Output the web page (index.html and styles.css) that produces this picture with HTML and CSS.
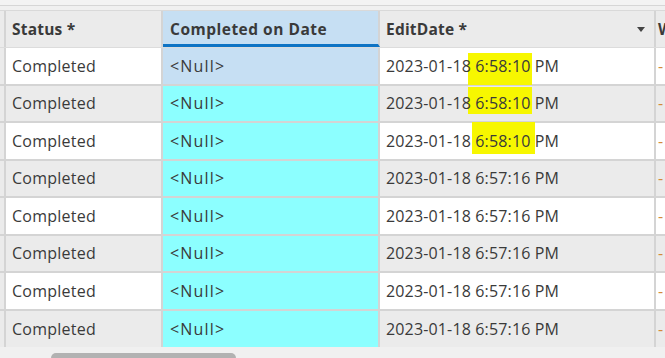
FILE: index.html
```html
<!DOCTYPE html>
<html>
<head>
<meta charset="utf-8">
<link rel="stylesheet" href="styles.css">
</head>
<body>
<div class="top"></div>
<div class="grid">
  <div class="row head">
    <div class="gut"></div>
    <div class="c c1"><span>Status *</span></div>
    <div class="c c2 sel"><span>Completed on Date</span></div>
    <div class="c c3"><span>EditDate *</span><span class="tri"></span></div>
    <div class="c c4"><span>W</span></div>
  </div>
  <div class="row odd">
    <div class="gut"></div>
    <div class="c c1"><span>Completed</span></div>
    <div class="c c2 selcell"><span class="null">&lt;Null&gt;</span></div>
    <div class="c c3"><span class="date">2023-01-18 6:58:10 PM</span><span class="hl h1"></span></div>
    <div class="c c4"><span class="dash">-</span></div>
  </div>
  <div class="row even">
    <div class="gut"></div>
    <div class="c c1"><span>Completed</span></div>
    <div class="c c2 cyan"><span class="null">&lt;Null&gt;</span></div>
    <div class="c c3"><span class="date">2023-01-18 6:58:10 PM</span><span class="hl h2"></span></div>
    <div class="c c4"><span class="dash">-</span></div>
  </div>
  <div class="row odd">
    <div class="gut"></div>
    <div class="c c1"><span>Completed</span></div>
    <div class="c c2 cyan"><span class="null">&lt;Null&gt;</span></div>
    <div class="c c3"><span class="date">2023-01-18 6:58:10 PM</span><span class="hl h3"></span></div>
    <div class="c c4"><span class="dash">-</span></div>
  </div>
  <div class="row even">
    <div class="gut"></div>
    <div class="c c1"><span>Completed</span></div>
    <div class="c c2 cyan"><span class="null">&lt;Null&gt;</span></div>
    <div class="c c3"><span class="date">2023-01-18 6:57:16 PM</span></div>
    <div class="c c4"><span class="dash">-</span></div>
  </div>
  <div class="row odd">
    <div class="gut"></div>
    <div class="c c1"><span>Completed</span></div>
    <div class="c c2 cyan"><span class="null">&lt;Null&gt;</span></div>
    <div class="c c3"><span class="date">2023-01-18 6:57:16 PM</span></div>
    <div class="c c4"><span class="dash">-</span></div>
  </div>
  <div class="row even">
    <div class="gut"></div>
    <div class="c c1"><span>Completed</span></div>
    <div class="c c2 cyan"><span class="null">&lt;Null&gt;</span></div>
    <div class="c c3"><span class="date">2023-01-18 6:57:16 PM</span></div>
    <div class="c c4"><span class="dash">-</span></div>
  </div>
  <div class="row odd">
    <div class="gut"></div>
    <div class="c c1"><span>Completed</span></div>
    <div class="c c2 cyan"><span class="null">&lt;Null&gt;</span></div>
    <div class="c c3"><span class="date">2023-01-18 6:57:16 PM</span></div>
    <div class="c c4"><span class="dash">-</span></div>
  </div>
  <div class="row even last">
    <div class="gut"></div>
    <div class="c c1"><span>Completed</span></div>
    <div class="c c2 cyan"><span class="null">&lt;Null&gt;</span></div>
    <div class="c c3"><span class="date">2023-01-18 6:57:16 PM</span></div>
    <div class="c c4"><span class="dash">-</span></div>
  </div>
</div>
<div class="bottom"><div class="thumb"></div></div>
</body>
</html>
```
FILE: styles.css
```css
html, body {
  margin: 0;
  padding: 0;
  background: #f0f0f0;
  overflow: hidden;
}
body {
  width: 665px;
  height: 358px;
  font-family: "Open Sans", "Noto Sans", sans-serif;
  font-size: 16px;
  letter-spacing: 0.25px;
  color: #3a3a3a;
}
.top {
  height: 5px;
  background: #f3f3f3;
  border-bottom: 1px solid #d6d6d6;
}
.grid {
  margin-top: 4px;
  border-top: 1px solid #d9d9d9;
  display: flex;
  flex-direction: column;
}
.row {
  display: flex;
  height: 37.5px;
  box-sizing: border-box;
  border-bottom: 2px solid #d4d4d4;
  position: relative;
}
.row.last {
  height: 36px;
  border-bottom: none;
}
.row.head {
  height: 37px;
  background: #ebebeb;
  border-bottom: 1px solid #dcdcdc;
}
.odd { background: #ffffff; }
.even { background: #ebebeb; }
.gut {
  width: 4px;
  background: #ebebeb;
  border-right: 2px solid #d4d4d4;
  flex: none;
}
.c {
  display: flex;
  align-items: center;
  box-sizing: border-box;
  border-right: 2px solid #d4d4d4;
  padding-left: 6px;
  white-space: nowrap;
  flex: none;
  position: relative;
}
.c1 { width: 157px; }
.c2 { width: 217px; padding-left: 7px; }
.c3 { width: 276px; padding-left: 6px; }
.c4 { flex: 1; border-right: none; padding-left: 2px; overflow: hidden; }
.head .c {
  font-weight: 700;
  font-size: 15.5px;
  letter-spacing: 0.2px;
  color: #3a3a3a;
}
.head .c2.sel {
  background: #c6dff3;
  border-bottom: 3px solid #0f74c4;
  padding-top: 2px;
  letter-spacing: 0.5px;
}
.null { letter-spacing: 1.2px; }
.date {
  letter-spacing: 0.15px;
  position: relative;
  z-index: 1;
}
.selcell { background: #c6dff3; }
.cyan { background: #8cffff; }
.tri {
  position: absolute;
  right: 9px;
  top: 16px;
  width: 0;
  height: 0;
  border-left: 4.5px solid transparent;
  border-right: 4.5px solid transparent;
  border-top: 5px solid #444;
}
.dash { color: #d48a3a; }
.hl {
  position: absolute;
  background: #f7f700;
  left: 88px;
  width: 64px;
}
.h1 { top: 5px; height: 32px; }
.h2 { top: 1px; height: 27px; }
.h3 { top: -1px; height: 32px; left: 92px; width: 63px; }
.bottom {
  height: 12px;
  background: #f0f0f0;
  position: relative;
}
.thumb {
  position: absolute;
  left: 51px;
  top: 6px;
  width: 185px;
  height: 10px;
  border-radius: 5px;
  background: #b2b2b2;
}
```
